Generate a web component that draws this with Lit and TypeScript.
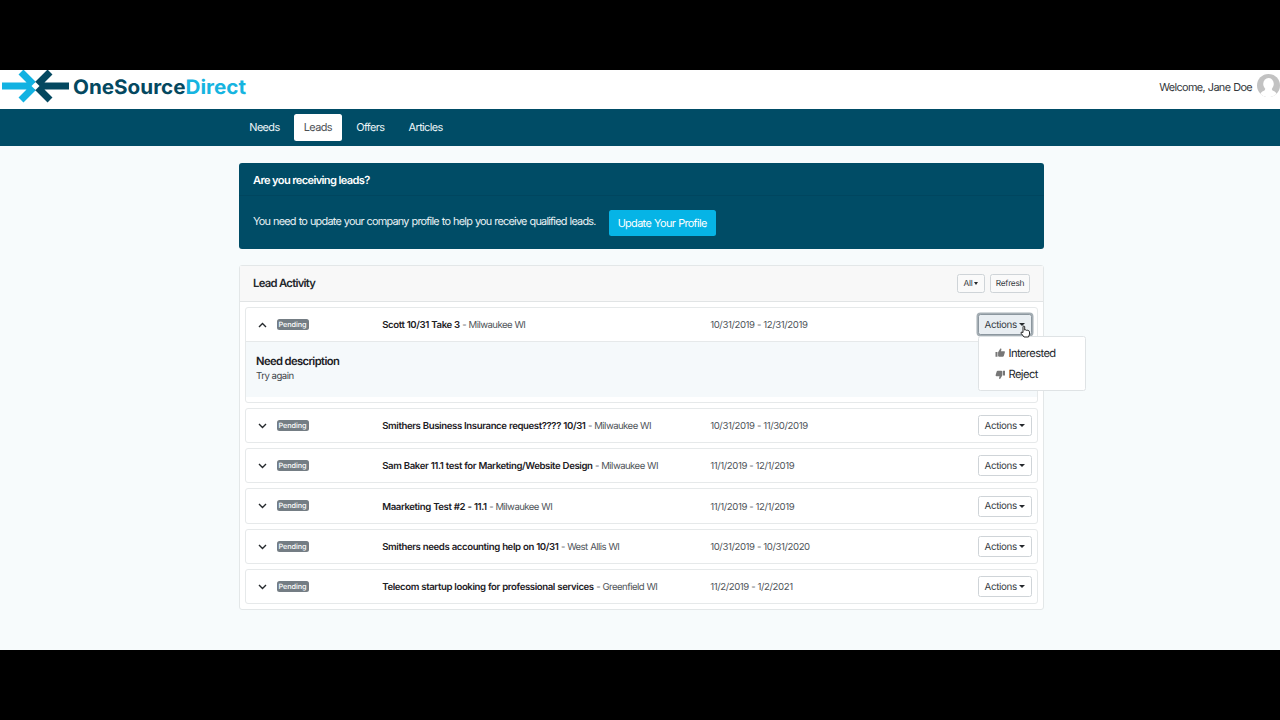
import { LitElement, html, css, svg } from "lit";
import { customElement, property } from "lit/decorators.js";

interface Lead { title: string; city: string; dates: string; open?: boolean; body?: string; }

const leads: Lead[] = [
  { title: "Scott 10/31 Take 3", city: "Milwaukee WI", dates: "10/31/2019 - 12/31/2019", open: true, body: "Try again" },
  { title: "Smithers Business Insurance request???? 10/31", city: "Milwaukee WI", dates: "10/31/2019 - 11/30/2019" },
  { title: "Sam Baker 11.1 test for Marketing/Website Design", city: "Milwaukee WI", dates: "11/1/2019 - 12/1/2019" },
  { title: "Maarketing Test #2 - 11.1", city: "Milwaukee WI", dates: "11/1/2019 - 12/1/2019" },
  { title: "Smithers needs accounting help on 10/31", city: "West Allis WI", dates: "10/31/2019 - 10/31/2020" },
  { title: "Telecom startup looking for professional services", city: "Greenfield WI", dates: "11/2/2019 - 1/2/2021" },
];

const thumb = svg`<path d="M0 4.500h2.300v5.500H0zM3 5 5.400.8c.9-.4 1.700.3 1.400 1.300L6.300 3.800h3.600c.8 0 1.100.6.9 1.300L9.600 9.300c-.2.5-.6.8-1.200.8H4.200L3 9.500z"/>`;

@customElement("lead-row")
class LeadRow extends LitElement {
  @property({ attribute: false }) lead!: Lead;

  static styles = css`
    :host { display: block; border: 1px solid #e6e9ea; border-radius: 3px; background: #fff; }
    .line { display: flex; align-items: center; height: 33.3px; box-sizing: border-box; padding-top: .5px; position: relative; }
    .chev { width: 9px; height: 6px; margin-left: 11.500px; flex: none; }
    .badge { margin-left: 10px; width: 32px; height: 11px; border-radius: 2.500px; background: #747d84; color: #fff;
      font: 500 7.300px/11px Inter, sans-serif; letter-spacing: -.1px; text-align: center; flex: none; position: relative; top: -.5px; }
    .title { margin-left: 73.700px; width: 328px; flex: none; white-space: nowrap; font-size: 9.600px; color: #50555a; letter-spacing: -.56px; word-spacing: .3px; padding-top: 1.500px; }
    .title b { font-weight: 600; color: #1c2024; letter-spacing: -.39px; }
    .dates { flex: 1; font-size: 9.600px; color: #50555a; letter-spacing: -.4px; white-space: nowrap; padding-top: 1.500px; }
    .btn { box-sizing: border-box; width: 54px; height: 21px; margin-right: 5px; border: 1px solid #cfd4d8; border-radius: 2.500px;
      display: flex; align-items: center; justify-content: space-between; padding: 1px 5.500px 0 6px; font-size: 9.800px; letter-spacing: -.35px; color: #34393e; }
    .btn.on { background: #e9eef2; border-color: #8c979f; box-shadow: 0 0 0 1.500px #a6afb5; }
    .caret { border: 3px solid transparent; border-top-color: #24282c; border-bottom: 0; margin-top: -1.500px; }
    .body { background: #f5f9fb; border-top: 1px solid #e6e9ea; height: 55.500px; margin-bottom: 5px; padding: 0 10px; box-sizing: border-box; }
    .body h3 { margin: 0; padding-top: 12px; font-size: 11.200px; line-height: 15px; font-weight: 600; color: #1c2024; letter-spacing: -.6px; }
    .body p { margin: 0; font-size: 9.600px; line-height: 16px; color: #40454a; letter-spacing: -.5px; }
    .menu { position: absolute; z-index: 2; top: 28px; right: -49px; width: 108px; height: 55px; box-sizing: border-box;
      background: #fff; border: 1px solid #dfe3e5; border-radius: 2.500px; padding: 5px 0 0 16px; }
    .item { display: flex; align-items: center; gap: 3.500px; height: 21.500px; font-size: 11.200px; letter-spacing: -.6px; color: #24282c; }
    .item svg { width: 10.500px; height: 9.500px; fill: #777; }
    .down { transform: rotate(180deg); }
    .cursor { position: absolute; z-index: 3; right: 6px; top: 17px; width: 11px; height: 13px; }
  `;

  render() {
    const l = this.lead;
    return html`
      <div class="line">
        <svg class="chev" viewBox="0 0 9 6"><path d=${l.open ? "M1 5 4.500 1.500 8 5" : "M1 1 4.500 4.500 8 1"} fill="none" stroke="#24282c" stroke-width="1.400"/></svg>
        <span class="badge">Pending</span>
        <span class="title"><b>${l.title}</b> - ${l.city}</span>
        <span class="dates">${l.dates}</span>
        <span class="btn ${l.open ? "on" : ""}">Actions<i class="caret"></i></span>
        ${l.open ? html`
          <div class="menu">
            <div class="item"><svg viewBox="0 0 11 11">${thumb}</svg>Interested</div>
            <div class="item"><svg class="down" viewBox="0 0 11 11">${thumb}</svg>Reject</div>
          </div>
          <svg class="cursor" viewBox="0 0 11 13"><path d="M3 7.500V1.500q.9-1 1.700 0v3.600q1-.7 1.700.2 1-.5 1.600.400 1.200-.3 1.500.8v2.700L8.500 12H4L1 8.200q-.3-1.200 1-1.100z" fill="#fff" stroke="#111" stroke-width=".9"/></svg>` : ""}
      </div>
      ${l.open ? html`<div class="body"><h3>Need description</h3><p>${l.body}</p></div>` : ""}`;
  }
}

@customElement("app-root")
class AppRoot extends LitElement {
  static styles = css`
    :host { display: block; box-sizing: border-box; height: 720px; padding: 70px 0; background: #000; overflow: hidden; font-family: Inter, sans-serif; text-rendering: geometricPrecision; }
    .page { height: 580px; background: #f7fbfc; overflow: hidden; }
    header { height: 38.500px; background: #fff; display: flex; justify-content: space-between; }
    .logo { width: 250px; height: 38px; }
    .word { font: 700 20px Inter, sans-serif; }
    .user { display: flex; align-items: flex-start; }
    .user span { font-size: 10.900px; line-height: 34px; color: #33373b; letter-spacing: -.66px; word-spacing: .5px; margin-right: 5px; }
    .avatar { width: 23px; height: 23px; margin-top: 4px; }
    nav { height: 37.500px; background: #004c66; display: flex; align-items: center; padding-left: 239px; }
    nav a { height: 27px; box-sizing: border-box; padding: 0 10.500px 0 10.300px; margin-right: 3.500px; line-height: 27px; font-size: 10.900px; color: #eef6f9; letter-spacing: -.62px; border-radius: 2.500px; }
    nav a.on { background: #fff; color: #4c5054; }
    main { width: 805px; margin: 17px 0 0 239px; }
    .promo { height: 86px; background: #004c66; border-radius: 3px; color: #fff; }
    .promo h2 { margin: 0; height: 33px; box-sizing: border-box; padding-left: 14px; line-height: 34px; font-size: 11.100px; font-weight: 600; letter-spacing: -.63px; border-bottom: 1px solid #00465f; }
    .promo div { display: flex; align-items: center; padding: 14px 0 0 14px; font-size: 10.900px; letter-spacing: -.78px; word-spacing: .6px; color: #e9f2f5; }
    .promo p { margin: 0 13px 3px 0; white-space: nowrap; }
    .promo .cta { width: 107px; height: 25.500px; line-height: 26px; text-align: center; border-radius: 2.500px; background: #06b4e6; color: #fff; letter-spacing: -.65px; }
    .card { margin-top: 16px; border: 1px solid #e3e7e8; border-radius: 3px; background: #fff; }
    .head { display: flex; align-items: center; height: 35px; background: #f8f8f8; border-bottom: 1px solid #e1e4e5; padding: 0 13px; }
    .head h2 { flex: 1; margin: 0 0 2px; font-size: 11.300px; font-weight: 600; color: #24282c; letter-spacing: -.72px; }
    .small { box-sizing: border-box; height: 19px; border: 1px solid #cfd4d8; border-radius: 2.500px; background: #fafafa; font-size: 8.400px; letter-spacing: -.3px; color: #34393e;
      display: flex; align-items: center; justify-content: center; gap: 2px; margin-left: 5px; }
    .all { width: 28px; } .refresh { width: 40px; }
    .caret { border: 2.400px solid transparent; border-top: 3px solid #24282c; border-bottom: 0; }
    .list { display: flex; flex-direction: column; gap: 5px; padding: 5px 5.500px 4.500px 5px; }
  `;

  render() {
    return html`<div class="page">
      <header>
        <svg class="logo" viewBox="0 0 250 38">
          <g fill="none" stroke-width="7">
            <path d="M2 16H31M21 2 34 15M21 30 34 17" stroke="#12b2e2"/>
            <path d="M69 16H40M50 2 37 15M50 30 37 17" stroke="#044860"/>
          </g>
          <path d="M35.500 12 39.500 16 35.500 20 31.500 16z" fill="#fff"/>
          <text class="word" x="73" y="23.500" textLength="173" lengthAdjust="spacingAndGlyphs" fill="#044860">OneSource<tspan fill="#16b4e0">Direct</tspan></text>
        </svg>
        <div class="user"><span>Welcome, Jane Doe</span>
          <svg class="avatar" viewBox="0 0 23 23"><defs><clipPath id="c"><circle cx="11.500" cy="11.500" r="11.500"/></clipPath></defs>
            <g clip-path="url(#c)"><path d="M0 0H23V23H0z" fill="#c2c2c2"/><ellipse cx="11.500" cy="10" rx="5.300" ry="6" fill="#fff"/><path d="M2.500 23q0-5 5-6.500l1.500-3h5l1.500 3q5 1.500 5 6.500z" fill="#fff"/></g></svg>
        </div>
      </header>
      <nav><a>Needs</a><a class="on">Leads</a><a>Offers</a><a>Articles</a></nav>
      <main>
        <section class="promo">
          <h2>Are you receiving leads?</h2>
          <div><p>You need to update your company profile to help you receive qualified leads.</p><span class="cta">Update Your Profile</span></div>
        </section>
        <section class="card">
          <div class="head"><h2>Lead Activity</h2><span class="small all">All<i class="caret"></i></span><span class="small refresh">Refresh</span></div>
          <div class="list">${leads.map((l) => html`<lead-row .lead=${l}></lead-row>`)}</div>
        </section>
      </main>
    </div>`;
  }
}
